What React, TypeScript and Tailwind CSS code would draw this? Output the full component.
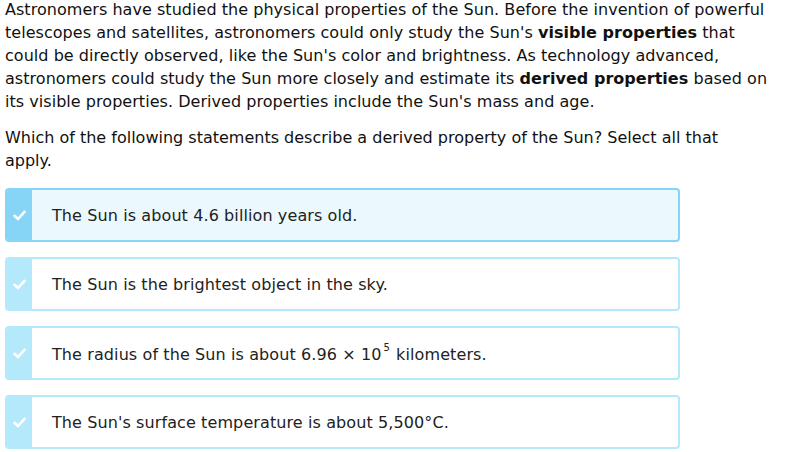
import React from "react";

const Check = () => (
  <svg width="13" height="11" viewBox="0 0 13 11" fill="none">
    <path d="M1.5 5.8 L5 9 L11.5 1.8" stroke="white" strokeWidth="2.6" strokeLinecap="round" strokeLinejoin="round" />
  </svg>
);

function Option({ selected, children }: { selected?: boolean; children: React.ReactNode }) {
  return (
    <div
      className={
        "flex h-[54px] w-[675px] overflow-hidden rounded-[4px] border-2 " +
        (selected ? "border-[#87d5f6] bg-[#ebf8fe]" : "border-[#b4e9fc] bg-white")
      }
    >
      <div
        className={
          "flex w-[25px] shrink-0 items-center justify-center " +
          (selected ? "bg-[#87d5f6]" : "bg-[#b4e9fc]")
        }
      >
        <Check />
      </div>
      <div className="flex items-center pl-[20px] text-[16px] tracking-[0.1px] text-[#222]">{children}</div>
    </div>
  );
}

export default function App() {
  return (
    <div className="bg-white pl-[5px] pr-[20px] text-[16px] leading-[23px] text-[#111]" style={{ fontFamily: '"DejaVu Sans", Verdana, sans-serif' }}>
      <p className="m-0 mt-[-2px] whitespace-nowrap tracking-[0.04px]">
        Astronomers have studied the physical properties of the Sun. Before the invention of powerful
        <br />
        telescopes and satellites, astronomers could only study the Sun's <b>visible properties</b> that
        <br />
        could be directly observed, like the Sun's color and brightness. As technology advanced,
        <br />
        astronomers could study the Sun more closely and estimate its <b>derived properties</b> based on
        <br />
        its visible properties. Derived properties include the Sun's mass and age.
      </p>
      <p className="mt-[13px] whitespace-nowrap">
        Which of the following statements describe a derived property of the Sun? Select all that
        <br />
        apply.
      </p>
      <div className="mt-[16px] flex flex-col gap-[15px]">
        <Option selected>The Sun is about 4.6 billion years old.</Option>
        <Option>The Sun is the brightest object in the sky.</Option>
        <Option>
          <span className="relative top-[1px]">
            The radius of the Sun is about 6.96 × 10<sup className="relative top-[-9px] ml-[2px] mr-[1px] text-[10px]">5</sup> kilometers.
          </span>
        </Option>
        <Option>The Sun's surface temperature is about 5,500°C.</Option>
      </div>
    </div>
  );
}
